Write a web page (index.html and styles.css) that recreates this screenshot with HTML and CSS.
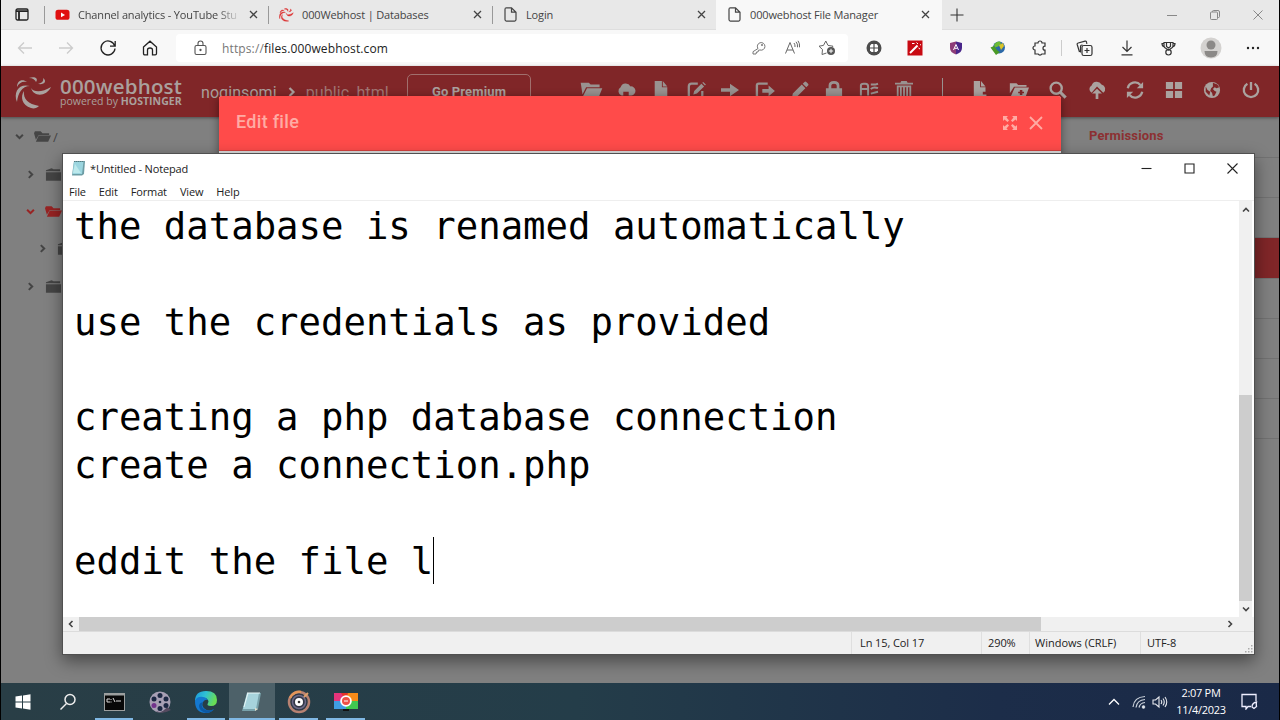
FILE: index.html
```html
<!DOCTYPE html>
<html lang="en">
<head>
    <meta charset="UTF-8">
    <meta name="viewport" content="width=device-width, initial-scale=1.0">
    <title>000webhost File Manager</title>
    <link rel="stylesheet" href="styles.css">
</head>
<body>
<div class="screen">

    <!-- browser -->
    <div class="tabs">
        <div class="tab-menu">
            <svg width="14" height="13" viewBox="0 0 14 13" fill="none" stroke="#222" stroke-width="1.3"><rect x="1" y="1" width="12" height="11" rx="1.5"/><path d="M1 3.2h12M4 3v9" stroke-width="1.8"/></svg>
        </div>
        <div class="tab">
            <svg class="tab-icon" width="15" height="12" viewBox="0 0 15 12"><rect x="0.5" y="0.8" width="14" height="10" rx="2.6" fill="#e01010"/><path d="M6 3.6v4.6l4-2.3z" fill="#fff"/></svg>
            <span class="tab-title fade">Channel analytics - YouTube Stu</span>
            <svg class="tab-close" width="9" height="9" viewBox="0 0 9 9"><path d="M1 1l7 7M8 1l-7 7"/></svg>
        </div>
        <div class="tab">
            <svg class="tab-icon" width="15" height="14" viewBox="0 0 40 36" fill="#d33"><path d="M19 13c2 6 11 5 19-1-3 10-16 13-19 1zM9 17c-3 10 3 14 17 17-15 4-25-7-17-17zM17 11C7 11 3 18 2 28-2 15 7 8 17 11zM14 7C9 5 5 8 3 13 3 6 9 2 14 7zM23 8c0-4-4-6-9-6 7-3 13 1 9 6zM26 9c5-2 6-5 4-7 5 2 4 8-4 7z" stroke="#d33" stroke-width="1"/></svg>
            <span class="tab-title">000Webhost | Databases</span>
            <svg class="tab-close" width="9" height="9" viewBox="0 0 9 9"><path d="M1 1l7 7M8 1l-7 7"/></svg>
        </div>
        <div class="tab">
            <svg class="tab-icon" width="13" height="15" viewBox="0 0 13 15" fill="none" stroke="#444" stroke-width="1.2"><path d="M1 2.3Q1 .8 2.4.8H7.5L12 5.2V12.600q0 1.500-1.400 1.500H2.400Q1 14.100 1 12.600zM7.500.8v4.400H12"/></svg>
            <span class="tab-title">Login</span>
            <svg class="tab-close" width="9" height="9" viewBox="0 0 9 9"><path d="M1 1l7 7M8 1l-7 7"/></svg>
        </div>
        <div class="tab active">
            <svg class="tab-icon" width="13" height="15" viewBox="0 0 13 15" fill="none" stroke="#444" stroke-width="1.2"><path d="M1 2.3Q1 .8 2.4.8H7.5L12 5.2V12.600q0 1.500-1.400 1.500H2.400Q1 14.100 1 12.600zM7.500.8v4.400H12"/></svg>
            <span class="tab-title">000webhost File Manager</span>
            <svg class="tab-close" width="9" height="9" viewBox="0 0 9 9"><path d="M1 1l7 7M8 1l-7 7"/></svg>
        </div>
        <svg class="new-tab" width="14" height="14" viewBox="0 0 14 14"><path d="M7 0.500v13M0.500 7h13" stroke="#333" stroke-width="1.1"/></svg>
        <div class="window-buttons">
            <svg width="10" height="10" viewBox="0 0 10 10"><path d="M0 5.500h10"/></svg>
            <svg width="10" height="10" viewBox="0 0 10 10"><rect x="0.500" y="2" width="7" height="7.500" rx="1"/><path d="M2.500 2V1.500q0-1 1-1H8q1.500 0 1.500 1.500v4.500q0 1-1 1h-1"/></svg>
            <svg width="10" height="10" viewBox="0 0 10 10"><path d="M0.500 0.500l9 9M9.500 0.500l-9 9"/></svg>
        </div>
    </div>

    <div class="nav-bar">
        <div class="nav-buttons">
            <svg class="off" width="16" height="14" viewBox="0 0 16 14"><path d="M15 7H1.500M7 1.500L1.500 7 7 12.500"/></svg>
            <svg class="off" width="16" height="14" viewBox="0 0 16 14"><path d="M1 7h13.500M9 1.500L14.500 7 9 12.500"/></svg>
            <svg width="18" height="18" viewBox="0 0 18 18"><path d="M15.800 7.200A7 7 0 1 0 16 9.500M16.200 2v5.200H11"/></svg>
            <svg width="16" height="16" viewBox="0 0 16 16"><path d="M1.500 7L8 1.200 14.500 7v6.500q0 1.300-1.300 1.300H10.500V10q0-2-2.500-2T5.500 10v4.800H2.800q-1.300 0-1.300-1.300z"/></svg>
        </div>
        <div class="address">
            <svg width="13" height="16" viewBox="0 0 13 16" fill="none" stroke="#555" stroke-width="1.100"><rect x="1" y="5.500" width="11" height="9" rx="1.500"/><path d="M4 5.500V3.500a2.500 2.500 0 0 1 5 0v2"/><circle cx="6.500" cy="10" r=".6" fill="#555"/></svg>
            <span class="url">https://<b>files.000webhost.com</b></span>
            <div class="address-icons">
                <svg width="14" height="14" viewBox="0 0 14 14" fill="none" stroke="#777"><path d="M6 7.500A3.800 3.800 0 1 1 8 9L6.500 9.200 6 11H4.500L4 13H1v-2.300z"/><circle cx="10" cy="4" r=".7"/></svg>
                <svg width="16" height="16" viewBox="0 0 16 16" fill="none" stroke="#666"><path d="M1.500 13.500L6 2.500l4.500 11M3 10h6M10 3q1.300 1.500 1 4M12 1.800q2 2 1.500 5.500M14 .8q2 2.500 1.500 6.500"/></svg>
                <svg width="18" height="16" viewBox="0 0 18 16" fill="none" stroke="#666"><path d="M8.500 13L4 14.500l.5-5L1 6.200l4.500-.8L7.800 1l2.200 4.400 5 .8-1.500 1.600"/><circle cx="13" cy="11" r="4" fill="#555" stroke="none"/><path d="M10.800 11h4.400M13 8.800v4.400" stroke="#fff"/></svg>
            </div>
        </div>
        <div class="extensions">
            <svg width="16" height="16" viewBox="0 0 16 16"><circle cx="8" cy="8" r="7.500" fill="#4c4c4c"/><path d="M5.500 4h5L12 5.500v5L10.500 12h-5L4 10.500v-5z" fill="#fff"/><path d="M8 4v8M4 8h8" stroke="#4c4c4c" stroke-width="1.200"/></svg>
            <svg width="16" height="16" viewBox="0 0 16 16"><path d="M.5.500h15v15H.500z" fill="#c80a12"/><path d="M3 13l7.500-7.500" stroke="#fff" stroke-width="2"/><path d="M9.500 2.500L11 4M13 4.500l1 .5M5 3.500h2.500M11.500 8l1.500 1" stroke="#fff"/></svg>
            <svg width="14" height="14" viewBox="0 0 14 14"><path d="M7 .5L13 2v5q0 4.500-6 6.500Z" fill="#49268a"/><path d="M7 .5L1 2v5q0 4.500 6 6.500Z" fill="#8d3c78"/><path d="M4.500 9L7 3.500 9.500 9M5.500 7.300h3" fill="none" stroke="#fff"/></svg>
            <svg width="16" height="16" viewBox="0 0 16 16"><circle cx="9" cy="7.500" r="6" fill="#2c69a8"/><path d="M4 5Q6 1 10 1.500l1 2-3 3-3 1z" fill="#6cbc34"/><path d="M.5 7.500L4 6l4 5 2 1-4 3z" fill="#4a9a26"/><path d="M9 5l4-2 1 3-3 4z" fill="#d9c428"/></svg>
            <svg width="15" height="16" viewBox="0 0 15 16"><path d="M3 3h3a2 2 0 0 1 4 0h3v3.200a2 2 0 0 0 0 4V14h-3.200a2 2 0 0 1-3.600 0H3v-4a2 2 0 0 1 0-4z" fill="none" stroke="#333" stroke-width="1.200"/></svg>
        </div>
        <div class="nav-line"></div>
        <div class="browser-tools">
            <svg width="17" height="17" viewBox="0 0 17 17"><path d="M3.500 12L1.200 4.500q-.3-1.200 1-1.500L9 1.200q1.300-.3 1.500 1l.4 1.600M4.500 12.500v-6q0-1.500 1.500-1.500h.5"/><rect x="6" y="5.500" width="10" height="10" rx="1.800"/><path d="M8.500 10.500h5M11 8v5"/></svg>
            <svg width="14" height="16" viewBox="0 0 14 16"><path d="M7 .5v11M2.500 7L7 11.500 11.500 7M1.500 14.800h11"/></svg>
            <svg width="15" height="15" viewBox="0 0 15 15"><path d="M3 1.500h9V5q0 1.500-2 2.500L7.500 9 5 7.500Q3 6.500 3 5zM3 2.500H1q0 3 2.500 3.500M12 2.500h2q0 3-2.500 3.500M5.500 1.500v4l2 1.500 2-1.500v-4"/><circle cx="7.500" cy="11.300" r="2.700"/></svg>
            <svg width="22" height="22" viewBox="0 0 22 22"><circle cx="11" cy="11" r="10.500" fill="#d4d2d0" stroke="none"/><circle cx="11" cy="8" r="4.500" fill="#8b8987" stroke="none"/><path d="M4.500 14h13q0 6.500-6.500 6.500T4.500 14z" fill="#8b8987" stroke="none"/></svg>
            <svg width="14" height="4" viewBox="0 0 14 4"><g fill="#222" stroke="none"><circle cx="2" cy="2" r="1.200"/><circle cx="7" cy="2" r="1.200"/><circle cx="12" cy="2" r="1.200"/></g></svg>
        </div>
    </div>

    <!-- file manager page -->
    <div class="page">
        <div class="site-header">
            <svg class="logo" width="40" height="36" viewBox="0 0 40 36" fill="#aaa29f"><path d="M18 13c3 5 12 4 20-1-4 9-17 11-20 1zM11 16c-1 8 4 13 15 15-2 2-5 3-8 2-9-3-11-11-7-17zM17 11C9 11 5 18 4 27 0 17 6 8 17 11zM14 7C9 6 6 8 4 12 4 6 9 3 14 7zM23 7c-1-2-3-4-7-4 5-2 10 0 7 4zM25 9c4-1 6-3 5-6 4 3 2 7-5 6z"/></svg>
            <div class="brand">
                <div class="brand-name">000webhost</div>
                <div class="brand-sub">powered by <b>HOSTINGER</b></div>
            </div>
            <div class="crumbs">
                <span>noginsomi</span>
                <svg width="8" height="10" viewBox="0 0 8 10"><path d="M1.500 1l4 4-4 4" fill="none" stroke="#aaa09d" stroke-width="2.200"/></svg>
                <span class="dim">public_html</span>
            </div>
            <div class="premium">Go Premium</div>
            <div class="tools file-tools">
                <svg viewBox="0 0 24 20"><path d="M0 2h9l2 2h10v3H6L2 15zM7 8h17l-4 10H2z"/></svg>
                <svg viewBox="0 0 20 20"><path d="M5 16a5 5 0 0 1-1-9 6 6 0 0 1 11-1 5 5 0 0 1 1 10h-3v-4H7v4z"/></svg>
                <svg viewBox="0 0 20 20"><path d="M3 0h8v7h6v13H3zM12 0l5 6h-5z"/></svg>
                <svg viewBox="0 0 20 20"><path d="M12 3H5Q2 3 2 6v10q0 3 3 3h9q3 0 3-3v-5" fill="none" stroke="#999290" stroke-width="2.500"/><path d="M7 15l1-4 8-8 3 3-8 8zM17 2l1-1 3 3-1 1z"/></svg>
                <svg viewBox="0 0 20 20"><path d="M0 8h10V3l10 7-10 7v-5H0z"/></svg>
                <svg viewBox="0 0 20 20"><path d="M13 3H3Q1 3 1 5v11q0 3 3 3h5" fill="none" stroke="#999290" stroke-width="2.600"/><path d="M7 9h7V5l7 6-7 6v-4H7z"/></svg>
                <svg viewBox="0 0 20 20"><path d="M1 19l1-5L12 4l4 4L6 18zM13 3l2-2q1-1 2 0l2 2q1 1 0 2l-2 2z"/></svg>
                <svg viewBox="0 0 20 20"><path d="M1 8h3V5q0-5 6-5t6 5v3h3v12H1zM7 8h6V5q0-2-3-2T7 5z" fill-rule="evenodd"/></svg>
                <svg viewBox="0 0 20 20"><path d="M1 16V5q0-2 3-2h2q3 0 3 3v10M1 9h8M12 4h5l3-1M12 9q3-3 8-1M12 14l8-2" fill="none" stroke="#999290" stroke-width="2.200"/></svg>
                <svg viewBox="0 0 20 20"><path d="M0 2h6l1-2h6l1 2h6v2H0zM2 6h2v12H2zM5.500 6h2v12h-2zM9 6h2v12H9zM12.500 6h2v12h-2zM16 6h2v12h-2zM2 17h16v3H2zM2 5h16v2H2z"/></svg>
            </div>
            <div class="tools-line"></div>
            <div class="tools global-tools">
                <svg viewBox="0 0 20 20"><path d="M2 0h7v7h6v5h-3v3h4v4H2zM10 0l5 6h-5z"/></svg>
                <svg viewBox="0 0 24 20"><path d="M1 2h8l2 2h10v2H6L1 14zM7 7h17l-4 11H2zM13 10v2h-2v2h2v2h3v-2h2v-2h-2v-2z" fill-rule="evenodd"/></svg>
                <svg viewBox="0 0 20 20"><circle cx="8" cy="8" r="6.200" fill="none" stroke="#aaa29f" stroke-width="2.600"/><path d="M12.500 12.500l6 6" stroke="#aaa29f" stroke-width="3.500"/></svg>
                <svg viewBox="0 0 20 20"><path d="M4 13a4.500 4.500 0 0 1 0-8 6 6 0 0 1 11-1 5 5 0 0 1 2 9l-7-7z M10 8.500l5.500 5.500h-4V20h-3v-6h-4z"/></svg>
                <svg viewBox="0 0 20 20"><path d="M2 8a8 8 0 0 1 14-3.500M18 12a8 8 0 0 1-14 3.500" fill="none" stroke="#aaa29f" stroke-width="2.600"/><path d="M19 1v7h-7zM1 19v-7h7z"/></svg>
                <svg viewBox="0 0 20 20"><path d="M1 1h8v8H1zM11 1h8v8h-8zM1 11h8v8H1zM11 11h8v8h-8z"/></svg>
                <svg viewBox="0 0 20 20"><circle cx="10" cy="10" r="9"/><path d="M11 2l5 2 2 3-3 1-2-1-2 2 2 2 2 1-2 4-2 1-1-4-2-2 1-3 2-2zM3 6l2 4 3 2-1 4-4-4z" fill="#802628"/></svg>
                <svg viewBox="0 0 20 20"><path d="M6 3a8 8 0 1 0 8 0M10 1v9" fill="none" stroke="#aaa29f" stroke-width="2.600"/></svg>
            </div>
        </div>

        <div class="page-body">
            <div class="tree">
                <div class="node level-0"><svg class="arrow" viewBox="0 0 8 8"><path d="M1 2.500l3 3 3-3"/></svg><svg class="folder" viewBox="0 0 18 13"><path d="M1 1h6l2 2h7v2H5L2 10 0 3zM5 5.500h13L15 12H2z"/></svg><span>/</span></div>
                <div class="node level-1"><svg class="arrow" viewBox="0 0 8 8"><path d="M2.500 1l3 3-3 3"/></svg><svg class="folder" viewBox="0 0 18 13"><path d="M1 2l6-2 2 1h7v2H1zM1 4h16v9H1z"/></svg></div>
                <div class="node level-1 open"><svg class="arrow" viewBox="0 0 8 8"><path d="M1 2.500l3 3 3-3"/></svg><svg class="folder" viewBox="0 0 18 13"><path d="M1 1h6l2 2h7v2H5L2 10 0 3zM5 5.500h13L15 12H2z"/></svg></div>
                <div class="node level-2"><svg class="arrow" viewBox="0 0 8 8"><path d="M2.500 1l3 3-3 3"/></svg><svg class="folder" viewBox="0 0 18 13"><path d="M1 2l6-2 2 1h7v2H1zM1 4h16v9H1z"/></svg></div>
                <div class="node level-1"><svg class="arrow" viewBox="0 0 8 8"><path d="M2.500 1l3 3-3 3"/></svg><svg class="folder" viewBox="0 0 18 13"><path d="M1 2l6-2 2 1h7v2H1zM1 4h16v9H1z"/></svg></div>
            </div>
            <div class="file-list">
                <div class="list-head">Permissions</div>
                <div class="list-row"></div>
                <div class="list-row"></div>
                <div class="list-row selected"></div>
                <div class="list-row"></div>
                <div class="list-row"></div>
                <div class="list-row"></div>
                <div class="list-row"></div>
            </div>
        </div>
    </div>

    <!-- edit dialog -->
    <div class="dialog">
        <div class="dialog-head">
            <span>Edit file</span>
            <svg width="14" height="14" viewBox="0 0 14 14"><path d="M0 0h5L3.500 1.500 6 4.500 4.500 6l-3-2.500L0 5zM14 0v5l-1.500-1.500-3 2.500L8 4.500l2.500-3L9 0zM0 14V9l1.500 1.500 3-2.500L6 9.500l-2.500 3L5 14zM14 14H9l1.500-1.500-2.500-3L9.500 8l3 2.500L14 9z" fill="#ffaba4"/></svg>
            <svg width="14" height="14" viewBox="0 0 14 14"><path d="M1 1l12 12M13 1L1 13" stroke="#ffaba4" stroke-width="1.800"/></svg>
        </div>
    </div>

    <!-- notepad -->
    <div class="notepad">
        <div class="note-title">
            <svg width="15" height="16" viewBox="0 0 15 16"><path d="M3 1h11l-1 13-2 1.500H1z" fill="#6d9da5"/><path d="M3 2h9.500L11 14H1.500z" fill="#9bd5df"/><path d="M3 1.500h10" stroke="#537a80" stroke-dasharray="1 1"/><path d="M4 4l6 9H2z" fill="#bde9ec"/></svg>
            <span>*Untitled - Notepad</span>
            <div class="note-buttons">
                <svg width="11" height="11" viewBox="0 0 11 11"><path d="M.5 5.500h10"/></svg>
                <svg width="11" height="11" viewBox="0 0 11 11"><path d="M1 1h9v9H1z"/></svg>
                <svg width="11" height="11" viewBox="0 0 11 11"><path d="M.5.500l10 10M10.500.500l-10 10"/></svg>
            </div>
        </div>
        <div class="note-menu"><span>File</span><span>Edit</span><span>Format</span><span>View</span><span>Help</span></div>
        <div class="note-main">
            <pre class="note-text">the database is renamed automatically

use the credentials as provided

creating a php database connection
create a connection.php

eddit the file l<span class="caret"></span></pre>
            <div class="scroll-v">
                <svg viewBox="0 0 8 8"><path d="M1 5.500l3-3 3 3"/></svg>
                <div class="thumb"></div>
                <svg viewBox="0 0 8 8"><path d="M1 2.500l3 3 3-3"/></svg>
            </div>
        </div>
        <div class="scroll-h">
            <svg viewBox="0 0 8 8"><path d="M5.500 1l-3 3 3 3"/></svg>
            <div class="thumb"></div>
            <svg viewBox="0 0 8 8"><path d="M2.500 1l3 3-3 3"/></svg>
        </div>
        <div class="note-status">
            <span class="pos">Ln 15, Col 17</span>
            <span class="zoom">290%</span>
            <span class="eol">Windows (CRLF)</span>
            <span class="enc">UTF-8</span>
            <svg width="8" height="8" viewBox="0 0 8 8" fill="#aaa"><path d="M6 0h1.500v1.500H6zM6 3h1.500v1.500H6zM6 6h1.500v1.500H6zM3 3h1.500v1.500H3zM3 6h1.500v1.500H3zM0 6h1.500v1.500H0z"/></svg>
        </div>
    </div>

    <!-- taskbar -->
    <div class="taskbar">
        <div class="task start"><svg width="16" height="16" viewBox="0 0 16 16" fill="#fff"><path d="M.5 2.500L7 1.500v6H.500zM8 1.400L15.500.3v7.200H8zM.5 8.500H7v6L.500 13.500zM8 8.500h7.500v7.200L8 14.600z"/></svg></div>
        <div class="task"><svg width="18" height="18" viewBox="0 0 18 18" fill="none" stroke="#eee" stroke-width="1.500"><circle cx="11" cy="6.500" r="5"/><path d="M7.500 10.500L1.500 16.500"/></svg></div>
        <div class="task running"><svg width="21" height="18" viewBox="0 0 21 18"><path d="M0 0h21v18H0z" fill="#9c9f9f"/><path d="M1 2.500h19V17H1z" fill="#080808"/><path d="M3 6h3M3 6v3h3M7 6v1M7 8.500v1M9 5l2 4M12 8h5" fill="none" stroke="#ddd"/></svg></div>
        <div class="task"><svg width="22" height="22" viewBox="0 0 22 22"><circle cx="11" cy="11" r="10.500" fill="#a79fb4"/><path d="M4 18q7 7 14-2l4 3q-7 4-14 2z" fill="#554a60"/><g fill="#1b2743"><circle cx="11" cy="4.500" r="2.500"/><circle cx="17" cy="8" r="2.500"/><circle cx="17" cy="14.500" r="2.500"/><circle cx="11" cy="17.500" r="2.500"/><circle cx="5" cy="14.500" r="2.500" fill="#71338c"/><circle cx="5" cy="8" r="2.500"/><circle cx="11" cy="11" r="1.300"/></g></svg></div>
        <div class="task running"><svg width="24" height="24" viewBox="0 0 24 24">
            <defs>
                <linearGradient id="edgeTop" x1="0" y1="0" x2="1" y2=".3"><stop offset="0" stop-color="#1b98dc"/><stop offset=".5" stop-color="#2fc0d5"/><stop offset="1" stop-color="#69dd55"/></linearGradient>
            </defs>
            <path d="M1 11Q1 1 12 1q11 0 11 9 0 6-6 6-5 0-3-3 1-1 0-3-2-3-6-2-4 0-7 3z" fill="url(#edgeTop)"/><path d="M1 11q2-5 8-4 3 0 5 3-3-1-5 2-2 4 2 7 4 3 9 0-3 4-8 4Q1 23 1 11z" fill="#1478cf"/><path d="M9 12q-3 4 1 7 5 3 10 0-3 4-8 4-7-2-7-7 0-3 4-4z" fill="#0c59a4"/></svg></div>
        <div class="task running current"><svg width="22" height="22" viewBox="0 0 22 22"><path d="M6 2h14l-3 16-3 2H1z" fill="#78a1aa"/><path d="M6 2h12l-3 16H2z" fill="#a7d3dc"/><path d="M6 2h13M7 2L3 16" stroke="#e9f7f7"/><path d="M14 20l3-2-3-1z" fill="#e4dfcb"/></svg></div>
        <div class="task running"><svg width="24" height="24" viewBox="0 0 24 24" fill="none"><circle cx="12" cy="12" r="10" stroke="#b88272" stroke-width="2.500"/><path d="M14 2a10 10 0 0 0-11 6" stroke="#e39558" stroke-width="2.500"/><circle cx="12" cy="12" r="8" fill="#343846"/><circle cx="12" cy="12" r="6.500" stroke="#6c6b89" stroke-width="1.500"/><circle cx="12" cy="12" r="4" fill="#fff"/><circle cx="12" cy="12" r="1.300" fill="#333"/><path d="M17 7l4-4" stroke="#dda06b" stroke-width="2"/></svg></div>
        <div class="task running"><svg width="24" height="20" viewBox="0 0 24 20"><path d="M0 1h12v8H0z" fill="#e6347b"/><path d="M12 1h12v8H12z" fill="#f78b18"/><path d="M0 9h12v8H0z" fill="#409de2"/><path d="M12 9h12v8H12z" fill="#40c950"/><path d="M7 1h7l-2 8z" fill="#e73327"/><circle cx="12" cy="9" r="5.800" fill="#fff"/><circle cx="12" cy="9" r="4" fill="#ee5145"/><path d="M10 9h4" stroke="#fff"/><path d="M9 17h6v2H9z" fill="#111"/></svg></div>
        <div class="tray">
            <svg width="12" height="8" viewBox="0 0 12 8" fill="none" stroke="#fff" stroke-width="1.300"><path d="M1 6.500l5-5 5 5"/></svg>
            <svg width="14" height="14" viewBox="0 0 14 14" fill="none" stroke="#ccd3dc" stroke-width="1.200"><path d="M1 12Q2 2 13 1.500M4 12.500Q5 5 13 4.500M7 12.500q1-4.500 6-5"/><circle cx="11.500" cy="12" r="1.200" fill="#fff"/></svg>
            <svg width="16" height="14" viewBox="0 0 16 14" fill="none" stroke="#e7e9ee" stroke-width="1.100"><path d="M1 5h2.500L7 2v10L3.500 9H1zM9 5q1.500 2 0 4M11 3.500q2.500 3.500 0 7M13 2q3.500 5 0 10"/></svg>
            <div class="clock"><div>2:07 PM</div><div>11/4/2023</div></div>
            <svg width="17" height="17" viewBox="0 0 17 17" fill="none" stroke="#eef" stroke-width="1.300"><path d="M10 13.500H7l-2 2.500v-2.500H1V1.500h14V8"/><path d="M11 14q0-4 4.500-5-.5 2 0 4.500l-2.500 2z"/></svg>
        </div>
    </div>
</div>
</body>
</html>
```

FILE: styles.css
```css
* {
    box-sizing: border-box;
}
body {
    margin: 0;
    font-family: "Open Sans", "Noto Sans", sans-serif;
    font-size: 11px;
    color: #222;
}
svg {
    display: block;
    flex-shrink: 0;
}
.screen {
    position: relative;
    display: flex;
    flex-direction: column;
    width: 1280px;
    height: 720px;
    overflow: hidden;
    border-left: 1px solid #000;
    border-right: 1px solid #000;
}

/* tabs */
.tabs {
    display: flex;
    align-items: center;
    height: 30px;
    background: #e8e8e8;
    border-bottom: 1px solid #dedede;
}
.tab-menu {
    width: 43px;
    padding-left: 14px;
}
.tab {
    display: flex;
    align-items: center;
    width: 224px;
    height: 30px;
    padding: 0 10px 0 11px;
    background: linear-gradient(#999, #999) left center / 1px 18px no-repeat;
}
.tab.active {
    width: 226px;
    padding-right: 12px;
    padding-left: 11px;
    background: #f8f8f8;
}
.tab-icon {
    width: 15px;
}
.tab-title {
    flex: 1;
    margin: 0 6px 0 8px;
    white-space: nowrap;
    letter-spacing: -0.15px;
    color: #444;
}
.tab-title.fade {
    -webkit-mask-image: linear-gradient(to right, #000 84%, transparent 99%);
    mask-image: linear-gradient(to right, #000 84%, transparent 99%);
}
.tab-close {
    stroke: #444;
    stroke-width: 1.3;
}
.new-tab {
    margin-left: 8px;
}
.window-buttons {
    display: flex;
    gap: 33px;
    margin-left: auto;
    padding-right: 16px;
    fill: none;
    stroke: #888;
}

/* address bar row */
.nav-bar {
    display: flex;
    align-items: center;
    height: 36px;
    background: #f8f8f8;
}
.nav-buttons {
    display: flex;
    align-items: center;
    gap: 25px;
    width: 175px;
    padding-left: 16px;
    fill: none;
    stroke: #222;
    stroke-width: 1.3;
}
.nav-buttons .off {
    stroke: #ccc;
}
.address {
    display: flex;
    align-items: center;
    width: 672px;
    height: 28px;
    padding: 0 12px 0 18px;
    border-radius: 4px;
    background: #fff;
}
.url {
    margin-left: 15px;
    font-size: 12px;
    color: #777;
    letter-spacing: 0.13px;
}
.url b {
    font-weight: normal;
    color: #222;
}
.address-icons {
    display: flex;
    align-items: center;
    gap: 18px;
    margin-left: auto;
}
.extensions, .browser-tools {
    display: grid;
    grid-template-columns: repeat(5, 41.4px);
    place-items: center;
}
.extensions {
    margin-left: 5px;
}
.nav-line {
    width: 1px;
    height: 16px;
    margin-left: 1px;
    background: #ccc;
}
.browser-tools {
    margin-left: 2px;
    grid-template-columns: repeat(5, 42px);
    fill: none;
    stroke: #333;
    stroke-width: 1.2;
}

/* page */
.page {
    display: flex;
    flex-direction: column;
    height: 617px;
    background: #808080;
}
.site-header {
    display: flex;
    height: 51px;
    background: #802628;
    color: #aaa09d;
    box-shadow: 0 1px 3px rgba(0, 0, 0, 0.4);
}
.logo {
    margin: 9px 0 0 12px;
}
.brand {
    width: 148px;
    padding: 6px 0 0 7px;
}
.brand-name {
    font-size: 20.500px;
    line-height: 28px;
    font-weight: 600;
    letter-spacing: 0.2px;
}
.brand-sub {
    margin-top: -6px;
    font-size: 10.500px;
    line-height: 15px;
    letter-spacing: 0.02px;
}
.crumbs {
    display: flex;
    align-items: flex-start;
    width: 206px;
    padding-top: 16px;
    font-family: Roboto, sans-serif;
    font-size: 16px;
    line-height: 22px;
    letter-spacing: 0.08px;
}
.crumbs svg {
    margin: 5px 10px 0 11px;
}
.crumbs .dim {
    color: #a17774;
}
.premium {
    width: 124px;
    height: 36px;
    margin-top: 8px;
    border: 1px solid #a16f6d;
    border-radius: 5px;
    font-family: Roboto, sans-serif;
    font-size: 13px;
    font-weight: bold;
    line-height: 33px;
    letter-spacing: 0.15px;
    text-align: center;
}
.tools {
    display: grid;
    grid-auto-flow: column;
    justify-items: center;
    height: 18px;
    margin-top: 15px;
    fill: #aaa29f;
}
.tools svg {
    width: 20px;
    height: 18px;
}
.file-tools {
    grid-auto-columns: 34.67px;
    margin-left: 43.500px;
    fill: #999290;
}
.file-tools svg:first-child {
    width: 23px;
}
.tools-line {
    width: 1px;
    height: 24px;
    margin: 12px 19px 0 20.500px;
    background: #999290;
}
.global-tools {
    grid-auto-columns: 38.6px;
}
.page-body {
    display: flex;
    flex: 1;
    justify-content: space-between;
}
.tree {
    width: 218px;
    padding-top: 1px;
}
.node {
    display: flex;
    align-items: center;
    height: 37.400px;
    font-size: 13px;
    color: #444;
    fill: #454545;
}
.arrow {
    width: 9px;
    height: 9px;
    fill: none;
    stroke: #444;
    stroke-width: 1.8;
}
.folder {
    width: 17px;
    height: 13px;
    margin: 0 2px 0 10px;
}
.level-0 {
    padding-left: 14px;
}
.level-1 {
    padding-left: 25px;
}
.level-2 {
    padding-left: 37px;
}
.node.open {
    fill: #982323;
}
.open .arrow {
    stroke: #982323;
}
.file-list {
    width: 219px;
}
.list-head {
    height: 41px;
    padding-left: 29px;
    border-bottom: 1px solid #727272;
    font-family: Roboto, sans-serif;
    font-size: 13px;
    font-weight: bold;
    line-height: 38px;
    letter-spacing: 0.15px;
    color: #8c3032;
}
.list-row {
    height: 40.200px;
    border-bottom: 1px solid #727272;
}
.list-row.selected {
    background: #802628;
}

/* dialog on top of the page */
.dialog {
    position: absolute;
    top: 96px;
    left: 218px;
    width: 842px;
    height: 400px;
    border-radius: 3px;
    background: #ddd;
    box-shadow: 0 2px 10px rgba(0, 0, 0, 0.45);
}
.dialog-head {
    display: flex;
    align-items: center;
    gap: 12px;
    height: 55px;
    padding: 0 18px 0 17px;
    border-radius: 3px 3px 0 0;
    border-bottom: 1px solid #d4423f;
    background: #ff4b4a;
    color: #ffaba4;
    font-family: Roboto, sans-serif;
    font-size: 18px;
}
.dialog-head span {
    flex: 1;
    margin-top: -3px;
    font-weight: 500;
    letter-spacing: 0.3px;
}

/* notepad window */
.notepad {
    position: absolute;
    top: 153px;
    left: 61px;
    display: flex;
    flex-direction: column;
    width: 1193px;
    height: 502px;
    border: 1px solid #505050;
    background: #fff;
    box-shadow: 0 6px 16px rgba(0, 0, 0, 0.45);
}
.note-title {
    display: flex;
    align-items: center;
    height: 28px;
    padding-left: 8px;
    color: #222;
}
.note-title span {
    margin-left: 4px;
    letter-spacing: -0.15px;
}
.note-buttons {
    display: flex;
    gap: 32px;
    margin-left: auto;
    padding-right: 16px;
    fill: none;
    stroke: #222;
    stroke-width: 1.1;
}
.note-menu {
    display: flex;
    gap: 13px;
    height: 19px;
    padding-left: 6px;
    border-bottom: 1px solid #eee;
    line-height: 19px;
    letter-spacing: -0.15px;
}
.note-main {
    display: flex;
    height: 416px;
}
.note-text {
    flex: 1;
    margin: 0;
    padding: 2px 0 0 11px;
    font-family: "DejaVu Sans Mono", monospace;
    font-size: 37.300px;
    line-height: 47.800px;
    color: #000;
}
.caret {
    display: inline-block;
    width: 1px;
    height: 47px;
    margin: -10px 0;
    background: #000;
    vertical-align: 0;
}
.scroll-v, .scroll-h {
    display: flex;
    align-items: center;
    background: #f0f0f0;
    fill: none;
    stroke: #444;
    stroke-width: 1.6;
}
.scroll-v {
    flex-direction: column;
    justify-content: space-between;
    width: 13px;
    margin-right: 2px;
    padding: 5px 0 4px;
}
.scroll-v svg, .scroll-h svg {
    width: 8px;
    height: 8px;
}
.thumb {
    background: #cdcdcd;
}
.scroll-v .thumb {
    width: 13px;
    height: 206px;
    margin-top: auto;
    margin-bottom: 4px;
}
.scroll-h {
    height: 14px;
    padding: 0 20px 0 4px;
}
.scroll-h .thumb {
    width: 962px;
    height: 14px;
    margin-right: auto;
    margin-left: 4px;
}
.note-status {
    display: flex;
    justify-content: flex-end;
    flex: 1;
    border-top: 1px solid #dcdcdc;
    background: #f0f0f0;
    line-height: 22px;
}
.note-status span {
    padding-left: 6px;
    border-left: 1px solid #dfdfdf;
    white-space: nowrap;
    letter-spacing: -0.1px;
}
.note-status .pos {
    width: 130px;
    padding-left: 8px;
}
.note-status .zoom {
    width: 48px;
}
.note-status .eol {
    width: 111px;
    padding-left: 5px;
    letter-spacing: 0;
}
.note-status .enc {
    width: 105px;
}
.note-status svg {
    align-self: flex-end;
    margin: 0 1px 1px 0;
}

/* taskbar */
.taskbar {
    display: flex;
    height: 37px;
    background: linear-gradient(to right, #293e46, #243d49 45%, #1c2d49 78%, #1a2947);
}
.task {
    display: flex;
    align-items: center;
    justify-content: center;
    width: 46px;
    border: solid transparent;
    border-width: 0 4px;
}
.task.start {
    width: 44px;
}
.task.running {
    background: linear-gradient(#80b8e4, #80b8e4) left bottom / 100% 2px no-repeat padding-box;
}
.task.current {
    border-width: 0;
    background: linear-gradient(#80b8e4, #80b8e4) left bottom / 100% 2px no-repeat #4d6169;
}
.task.current ~ .task {
    width: 47px;
}
.tray {
    display: flex;
    align-items: center;
    margin-left: auto;
    padding-right: 21px;
    color: #fff;
}
.tray svg:nth-child(2) {
    margin-left: 12px;
}
.tray svg:nth-child(3) {
    margin-left: 6px;
}
.clock {
    width: 50px;
    margin: -1px 15px 0 8px;
    text-align: center;
    line-height: 17px;
    letter-spacing: -0.3px;
}
```
